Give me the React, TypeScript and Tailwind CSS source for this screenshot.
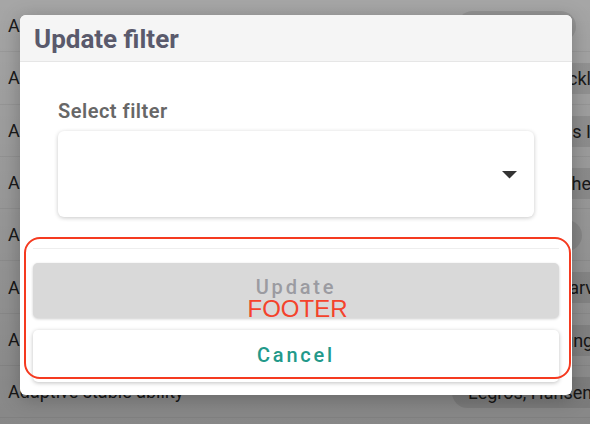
import React from "react";

const rows: { name: string; chip: string; chipLeft: number; chipW?: number }[] = [
  { name: "Adaptive bandwidth-monitored hub", chip: "Upton, Koss", chipLeft: 457, chipW: 119 },
  { name: "Advanced mobile project", chip: "Kuhlman, Bucklund", chipLeft: 452 },
  { name: "Ameliorated system engine", chip: "Marvin, Rolfes Inc", chipLeft: 452 },
  { name: "Assimilated logistical matrix", chip: "Gottliebs, Fisher", chipLeft: 452 },
  { name: "Automated zero defect model", chip: "Hand, Lind", chipLeft: 470, chipW: 112 },
  { name: "Adaptive global framework", chip: "Schowalter, Harvey", chipLeft: 444 },
  { name: "Advanced tangible archive", chip: "Kemmer, Young", chipLeft: 452 },
  { name: "Adaptive stable ability", chip: "Legros, Hansen", chipLeft: 452 },
];

export default function App() {
  return (
    <div className="relative w-[590px] h-[424px] overflow-hidden bg-white font-['Roboto',sans-serif]">
      {/* background list */}
      <div className="flex flex-col">
        {rows.map((r, i) => (
          <div key={i} className="relative h-[52.3px] flex items-center border-b border-[#f0f0f0]">
            <span className="pl-[8px] text-[18px] text-[#2a2a2a] whitespace-nowrap">{r.name}</span>
            <span
              className="absolute top-[11px] h-[31px] rounded-full bg-[#e6e6e6] pl-[16px] pr-[16px] flex items-center text-[18px] text-[#2a2a2a] whitespace-nowrap"
              style={{ left: r.chipLeft, width: r.chipW }}
            >
              {r.chip}
            </span>
          </div>
        ))}
      </div>

      {/* backdrop */}
      <div className="absolute inset-0 bg-[linear-gradient(180deg,rgba(0,0,0,0.35),rgba(0,0,0,0.47))]" />

      {/* dialog */}
      <div className="absolute left-[20px] top-[15px] w-[552px] h-[380px] rounded-[6px] bg-white overflow-hidden shadow-[0_4px_20px_rgba(0,0,0,0.25)] flex flex-col">
        <div className="h-[47px] shrink-0 bg-[#f5f5f5] border-b border-[#e6e6e6] flex items-center px-[14px]">
          <h2 className="text-[26px] font-bold text-[#5a5a6c] leading-none pt-[1px]">Update filter</h2>
        </div>

        <div className="px-[38px] pt-[37px] flex flex-col">
          <label className="text-[20px] font-semibold text-[#676767] tracking-[0.5px] leading-[24px]">Select filter</label>
          <div className="mt-[8px] h-[86px] rounded-[6px] bg-white shadow-[0_1px_4px_rgba(0,0,0,0.22)] flex items-center justify-end pr-[17px]">
            <svg width="15" height="8" viewBox="0 0 15 8" className="mt-[2px]">
              <polygon points="0,0 15,0 7.5,7.5" fill="#333333" />
            </svg>
          </div>
        </div>

        <div className="relative mt-[31px] mx-[13px] border-t border-[#eeeeee] pt-[14px] flex flex-col gap-[12px]">
          <button className="h-[55px] rounded-[5px] bg-[#d9d9d9] shadow-[0_1px_3px_rgba(0,0,0,0.2)] text-[20px] font-medium tracking-[2.8px] text-[#9b9ba1] flex items-center justify-center pb-[7px]">
            Update
          </button>
          <button className="h-[52px] rounded-[5px] bg-white shadow-[0_1px_4px_rgba(0,0,0,0.25)] text-[20px] font-medium tracking-[2.8px] text-[#22998a] flex items-center justify-center pb-[2px]">
            Cancel
          </button>
        </div>

        {/* footer highlight */}
        <div className="absolute left-[4px] top-[222px] w-[547px] h-[142px] border-[2.5px] border-[#f53a20] rounded-[16px] flex items-center justify-center pointer-events-none">
          <span className="font-['Liberation_Sans',Arial,sans-serif] text-[24px] text-[#f4432c] leading-none mt-[1px]">FOOTER</span>
        </div>
      </div>
    </div>
  );
}
